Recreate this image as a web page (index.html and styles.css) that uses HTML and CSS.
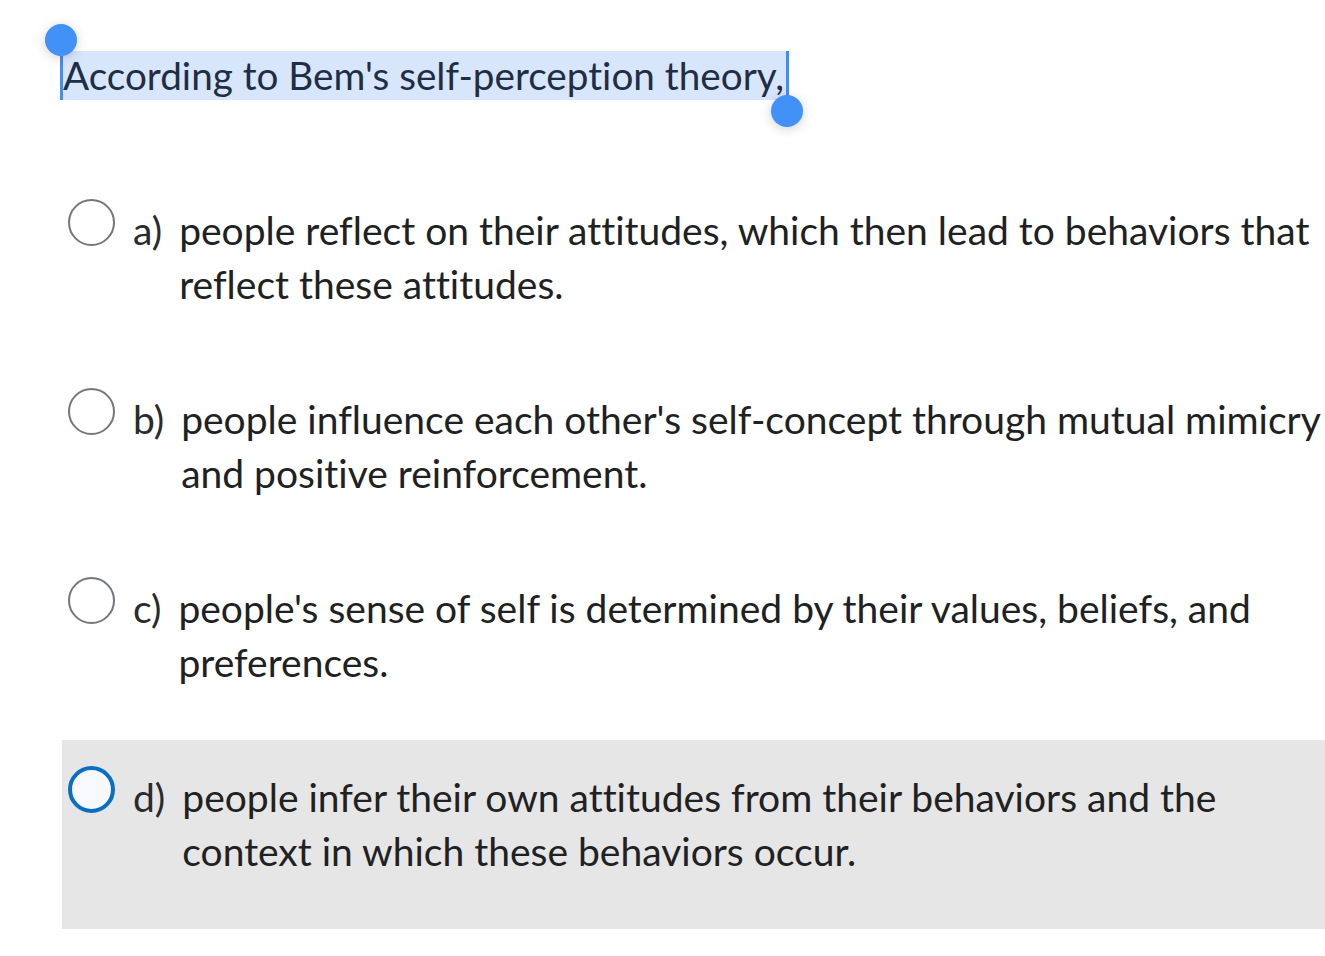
FILE: index.html
```html
<!DOCTYPE html>
<html lang="en">
<head>
<meta charset="utf-8">
<title>Question</title>
<link rel="stylesheet" href="styles.css">
</head>
<body>
<div class="page">
  <div class="question">
    <span class="sel">According to Bem's self-perception theory,</span>
    <span class="handle handle-start"></span>
    <span class="handle handle-end"></span>
  </div>
  <div class="options">
    <div class="option">
      <span class="radio"></span>
      <span class="label">a)</span>
      <span class="text">people reflect on their attitudes, which then lead to behaviors that reflect these attitudes.</span>
    </div>
    <div class="option">
      <span class="radio"></span>
      <span class="label">b)</span>
      <span class="text">people influence each other's self-concept through mutual mimicry and positive reinforcement.</span>
    </div>
    <div class="option">
      <span class="radio"></span>
      <span class="label">c)</span>
      <span class="text">people's sense of self is determined by their values, beliefs, and preferences.</span>
    </div>
    <div class="option option-focus">
      <span class="radio radio-focus"></span>
      <span class="label">d)</span>
      <span class="text">people infer their own attitudes from their behaviors and the context in which these behaviors occur.</span>
    </div>
  </div>
</div>
</body>
</html>
```

FILE: styles.css
```css
html, body {
  margin: 0;
  padding: 0;
  background: #ffffff;
}

body {
  font-family: Lato, "Open Sans", sans-serif;
  font-variant-ligatures: none;
  color: #202122;
}

.page {
  width: 1325px;
  overflow: hidden;
}

.question {
  position: relative;
  margin: 51px 0 0 62px;
  height: 49px;
  font-size: 38.7px;
  line-height: 49px;
  color: #1f2d45;
  white-space: nowrap;
}

.sel {
  display: inline-block;
  background: #d8e6fc;
  padding: 0 4px 0 1px;
}

.handle {
  position: absolute;
  width: 3px;
  background: #3f8ff5;
}

.handle::after {
  content: "";
  position: absolute;
  left: -15px;
  width: 32px;
  height: 32px;
  border-radius: 50%;
  background: #4191f7;
  box-shadow: 0 2px 12px rgba(0, 0, 0, 0.18);
}

.handle-start {
  left: -2px;
  top: 5px;
  height: 44px;
}

.handle-start::after {
  top: -32px;
}

.handle-end {
  left: 724px;
  top: 0;
  height: 55px;
}

.handle-end::after {
  top: 44px;
}

.options {
  margin: 73px 0 0 62px;
  display: flex;
  flex-direction: column;
}

.option {
  display: flex;
  align-items: flex-start;
  height: 189px;
  box-sizing: border-box;
  padding: 26px 0 0 6px;
  font-size: 39px;
  line-height: 54px;
}

.option-focus {
  background: #e6e6e6;
}

.radio {
  flex: none;
  width: 47px;
  height: 47px;
  box-sizing: border-box;
  border: 2px solid #73777c;
  border-radius: 50%;
  background: #ffffff;
  margin-right: 18px;
}

.radio-focus {
  border: 4px solid #0a6fc2;
  background: #f7f9ff;
}

.label {
  flex: none;
  margin-top: 4px;
  margin-right: 17px;
  color: #2a2b2d;
}

.text {
  flex: 1;
  margin-top: 4px;
}
```
